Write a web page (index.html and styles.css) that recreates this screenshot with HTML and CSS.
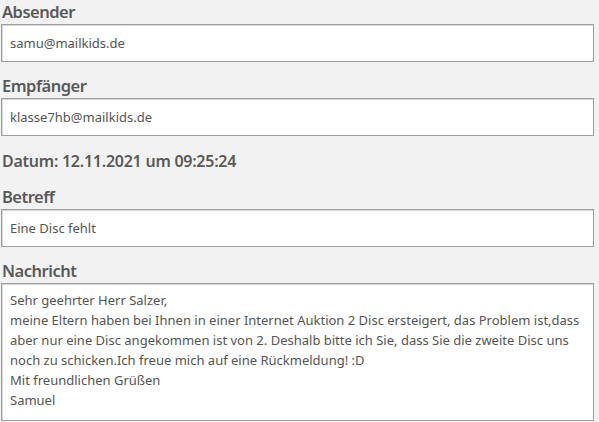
FILE: index.html
```html
<!DOCTYPE html>
<html lang="de">
<head>
<meta charset="utf-8">
<title>Nachricht</title>
<link rel="stylesheet" href="styles.css">
</head>
<body>
<div class="form">
  <div class="label first">Absender</div>
  <div class="field">samu@mailkids.de</div>
  <div class="label">Empfänger</div>
  <div class="field">klasse7hb@mailkids.de</div>
  <div class="date">Datum: 12.11.2021 um 09:25:24</div>
  <div class="label">Betreff</div>
  <div class="field">Eine Disc fehlt</div>
  <div class="label">Nachricht</div>
  <div class="field message">Sehr geehrter Herr Salzer,<br>meine Eltern haben bei Ihnen in einer Internet Auktion 2 Disc ersteigert, das Problem ist,dass aber nur eine Disc angekommen ist von 2. Deshalb bitte ich Sie, dass Sie die zweite Disc uns noch zu schicken.Ich freue mich auf eine Rückmeldung! :D<br>Mit freundlichen Grüßen<br>Samuel</div>
</div>
</body>
</html>
```

FILE: styles.css
```css
html, body {
  margin: 0;
  padding: 0;
  background: #f2f2f2;
}
body {
  font-family: "Noto Sans", "Open Sans", sans-serif;
  color: #555;
}
.form {
  width: 593px;
  padding-left: 1px;
}
.label, .date {
  font-size: 16.5px;
  font-weight: 600;
  letter-spacing: -0.5px;
  line-height: 24px;
  height: 24px;
  color: #595959;
  padding-left: 1px;
  margin-top: 12px;
}
.label.first {
  margin-top: 0;
}
.date {
  margin-top: 13px;
  font-size: 16px;
  letter-spacing: -0.25px;
}
.field {
  box-sizing: border-box;
  height: 38px;
  background: #fff;
  border: 1px solid #9e9e9e;
  box-shadow: inset 1px 1px 0 #d8d8d8;
  padding: 0 8px;
  font-size: 13px;
  line-height: 36px;
  color: #555;
}
.message {
  height: 138px;
  line-height: 20px;
  padding-top: 6px;
}
```
